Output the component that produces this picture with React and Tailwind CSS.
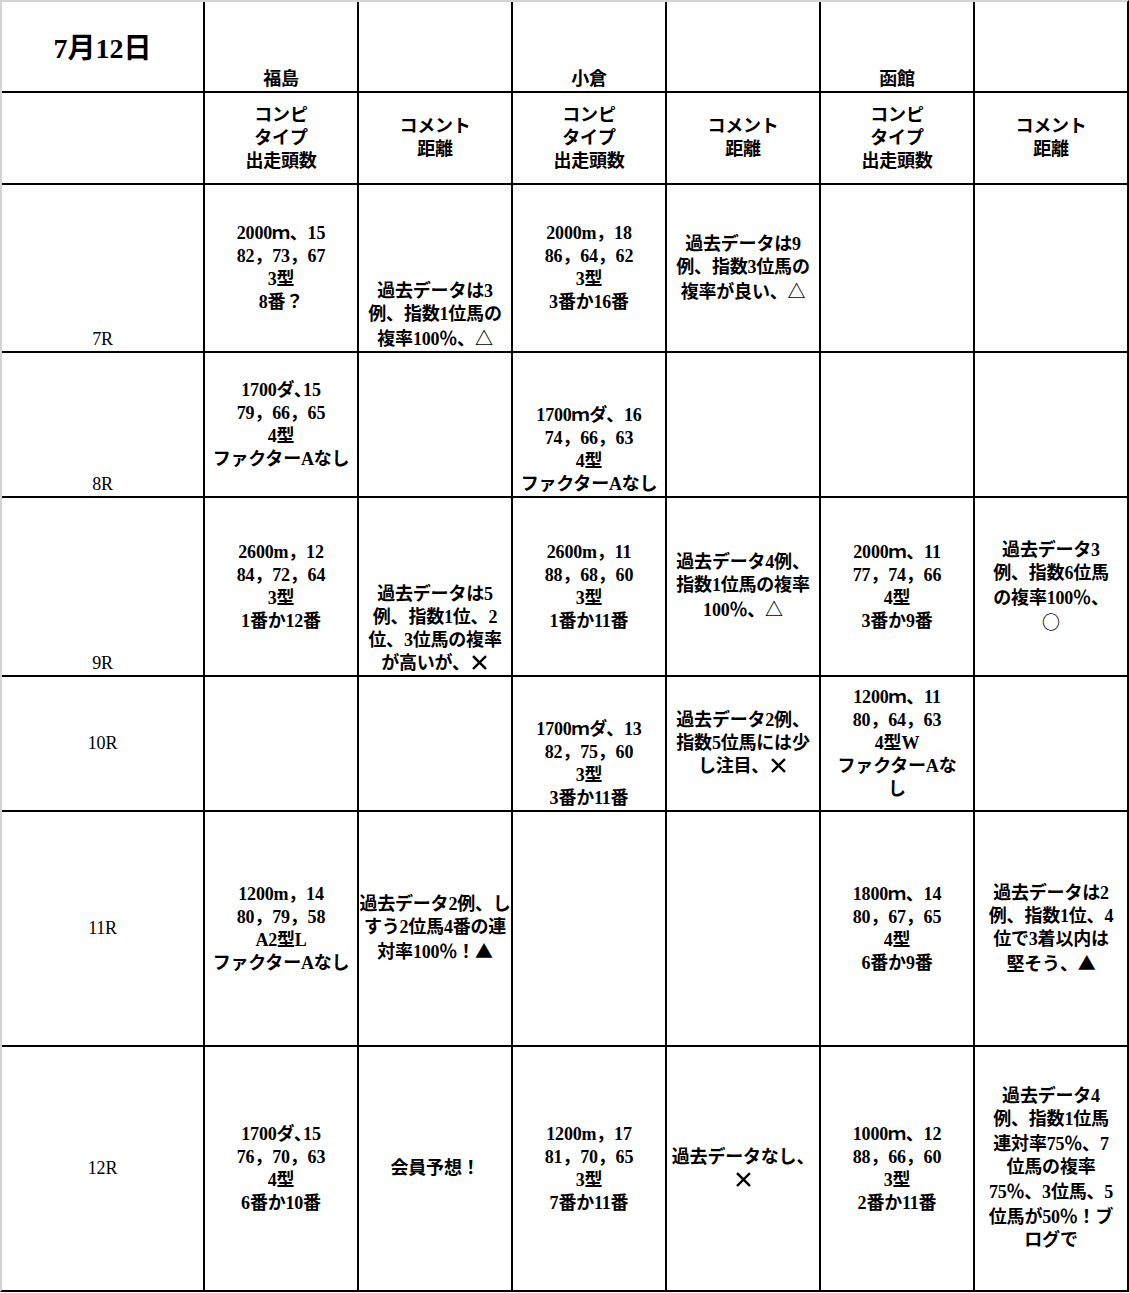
import React from 'react';

const SYMBOLS = /([○△▲％])/;

function Cross() {
  return (
    <svg viewBox="0 0 16 16" className="inline-block w-[15px] h-[15px] mx-[2px] align-[-1px]">
      <path d="M2 2 L14 14 M14 2 L2 14" stroke="black" strokeWidth="2.6" strokeLinecap="square" />
    </svg>
  );
}

function Line({ text }) {
  // symbols render from the CJK font so they come out full width
  return (
    <div className="whitespace-nowrap">
      {text.split(/([○△▲％✕])/).map((part, i) => {
        if (part === '✕') return <Cross key={i} />;
        if (SYMBOLS.test(part))
          return (
            <span key={i} className="font-['Noto_Sans_CJK_JP',sans-serif]">
              {part}
            </span>
          );
        return <span key={i}>{part}</span>;
      })}
    </div>
  );
}

function Cell({ lines = [], end = false, bold = true }) {
  return (
    <div
      className={`bg-white flex flex-col items-center text-center overflow-hidden text-[18px] leading-[23px] text-black tracking-[-0.2px] ${
        end ? 'justify-end' : 'justify-center'
      } ${bold ? 'font-bold' : 'font-normal'}`}
    >
      {lines.map((l, i) => (
        <Line key={i} text={l} />
      ))}
    </div>
  );
}

const head = ['コンピ', 'タイプ', '出走頭数'];
const comment = ['コメント', '距離'];

const rows = [
  {
    label: '7R',
    end: true,
    cells: [
      { lines: ['2000ｍ、15', '82，73，67', '3型', '8番？'] },
      { lines: ['過去データは3', '例、指数1位馬の', '複率100％、△'], end: true },
      { lines: ['2000m，18', '86，64，62', '3型', '3番か16番'] },
      { lines: ['過去データは9', '例、指数3位馬の', '複率が良い、△'] },
      {},
      {},
    ],
  },
  {
    label: '8R',
    end: true,
    cells: [
      { lines: ['1700ダ､15', '79，66，65', '4型', 'ファクターAなし'] },
      {},
      { lines: ['1700ｍダ、16', '74，66，63', '4型', 'ファクターAなし'], end: true },
      {},
      {},
      {},
    ],
  },
  {
    label: '9R',
    end: true,
    cells: [
      { lines: ['2600m，12', '84，72，64', '3型', '1番か12番'] },
      { lines: ['過去データは5', '例、指数1位、2', '位、3位馬の複率', 'が高いが、✕'], end: true },
      { lines: ['2600m，11', '88，68，60', '3型', '1番か11番'] },
      { lines: ['過去データ4例、', '指数1位馬の複率', '100％、△'] },
      { lines: ['2000ｍ、11', '77，74，66', '4型', '3番か9番'] },
      { lines: ['過去データ3', '例、指数6位馬', 'の複率100％、', '○'] },
    ],
  },
  {
    label: '10R',
    cells: [
      {},
      {},
      { lines: ['1700ｍダ、13', '82，75，60', '3型', '3番か11番'], end: true },
      { lines: ['過去データ2例、', '指数5位馬には少', 'し注目、✕'] },
      { lines: ['1200ｍ、11', '80，64，63', '4型W', 'ファクターAな', 'し'] },
      {},
    ],
  },
  {
    label: '11R',
    cells: [
      { lines: ['1200m，14', '80，79，58', 'A2型L', 'ファクターAなし'] },
      { lines: ['過去データ2例、し', 'すう2位馬4番の連', '対率100％！▲'] },
      {},
      {},
      { lines: ['1800ｍ、14', '80，67，65', '4型', '6番か9番'] },
      { lines: ['過去データは2', '例、指数1位、4', '位で3着以内は', '堅そう、▲'] },
    ],
  },
  {
    label: '12R',
    cells: [
      { lines: ['1700ダ､15', '76，70，63', '4型', '6番か10番'] },
      { lines: ['会員予想！'] },
      { lines: ['1200m，17', '81，70，65', '3型', '7番か11番'] },
      { lines: ['過去データなし、', '✕'] },
      { lines: ['1000ｍ、12', '88，66，60', '3型', '2番か11番'] },
      {
        lines: ['過去データ4', '例、指数1位馬', '連対率75％、7', '位馬の複率', '75％、3位馬、5', '位馬が50％！ブ', 'ログで'],
      },
    ],
  },
];

export default function App() {
  return (
    <div className="bg-white font-['Liberation_Serif','Noto_Sans_CJK_JP','DejaVu_Sans',serif]">
      <div className="w-[1129px] grid grid-cols-[201px_repeat(6,152px)] grid-rows-[89px_90px_166px_143px_177px_133px_233px_243px] gap-[2px] bg-black border-2 border-black border-l-[#d4d4d4] border-t-[#d4d4d4]">
        {/* date + venues */}
        <div className="bg-white flex items-center justify-center text-[28px] font-bold pt-[4px]">7月12日</div>
        <Cell lines={['福島']} end />
        <Cell />
        <Cell lines={['小倉']} end />
        <Cell />
        <Cell lines={['函館']} end />
        <Cell />

        {/* column titles */}
        <Cell />
        <Cell lines={head} />
        <Cell lines={comment} />
        <Cell lines={head} />
        <Cell lines={comment} />
        <Cell lines={head} />
        <Cell lines={comment} />

        {rows.map((row) => (
          <React.Fragment key={row.label}>
            <Cell lines={[row.label]} end={row.end} bold={false} />
            {row.cells.map((c, i) => (
              <Cell key={i} lines={c.lines} end={c.end} />
            ))}
          </React.Fragment>
        ))}
      </div>
    </div>
  );
}
